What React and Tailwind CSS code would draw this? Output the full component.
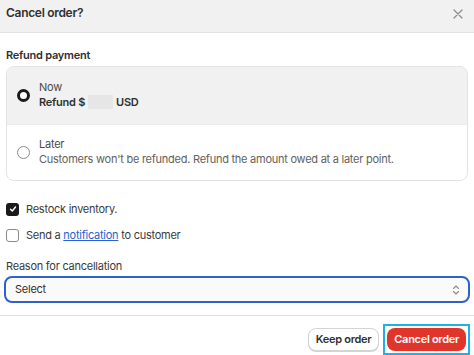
export default function App() {
  return (
    <div className="w-[474px] h-[355px] bg-white overflow-hidden text-[#303030] text-[11px] tracking-[-0.25px]" style={{ fontFamily: "Inter, 'Noto Sans', sans-serif" }}>
      <div className="h-[33px] bg-[#f1f1f1] border-b border-[#e3e3e3] flex items-start justify-between px-[6px] pt-[5px]">
        <h1 className="text-[12px] font-semibold leading-[16px] tracking-[-0.3px]">Cancel order?</h1>
        <svg width="10" height="10" viewBox="0 0 10 10" className="mt-[4px] mr-[5px]" stroke="#8a8a8a" strokeWidth="1.2" strokeLinecap="round">
          <path d="M1 1l8 8M9 1l-8 8" />
        </svg>
      </div>

      <div className="px-[6px]">
        <p className="mt-[14px] font-semibold leading-[16px]">Refund payment</p>

        <div className="mt-[3px] border border-[#e3e3e3] rounded-lg overflow-hidden">
          <div className="h-[57px] bg-[#f1f1f1] flex items-center gap-[9px] pl-[10px]">
            <span className="w-[13px] h-[13px] rounded-full border-[3.5px] border-[#1a1a1a] bg-white" />
            <div className="leading-[15px] -mt-[2px]">
              <div className="text-[#4a4a4a]">Now</div>
              <div className="font-semibold flex items-center">
                Refund $<span className="inline-block w-[25px] h-[14px] bg-[#e6e6e6] mx-[3px]" />USD
              </div>
            </div>
          </div>
          <div className="h-[56px] border-t border-[#ececec] flex items-center gap-[9px] pl-[10px]">
            <span className="w-[13px] h-[13px] rounded-full border border-[#8a8a8a] bg-white" />
            <div className="leading-[15px] -mt-[2px] text-[#616161]">
              <div className="text-[#4a4a4a]">Later</div>
              <div>Customers won't be refunded. Refund the amount owed at a later point.</div>
            </div>
          </div>
        </div>

        <div className="mt-[21px] flex items-center gap-[7px] h-[14px]">
          <span className="w-[13px] h-[13px] rounded-[3px] bg-[#1a1a1a] flex items-center justify-center">
            <svg width="8" height="8" viewBox="0 0 8 8" fill="none" stroke="white" strokeWidth="1.4" strokeLinecap="round" strokeLinejoin="round">
              <path d="M1.5 4.2l1.8 1.8 3.2-4" />
            </svg>
          </span>
          <span className="text-[#3a3a3a]">Restock inventory.</span>
        </div>

        <div className="mt-[12px] flex items-center gap-[7px] h-[14px]">
          <span className="w-[13px] h-[13px] rounded-[3px] border border-[#8a8a8a] bg-white" />
          <span className="text-[#3a3a3a]">
            Send a <a className="text-[#2463d1] underline">notification</a> to customer
          </span>
        </div>

        <p className="mt-[16px] leading-[16px] text-[#3a3a3a]">Reason for cancellation</p>
      </div>

      <div className="px-[4px] mt-[2px]">
        <div className="h-[27px] rounded-lg border-2 border-[#2f62c9] bg-[#fafafa] flex items-center justify-between pl-[9px] pr-[8px]">
          <span className="text-[#303030]">Select</span>
          <svg width="8" height="12" viewBox="0 0 8 12" fill="none" stroke="#8a8a8a" strokeWidth="1.1" strokeLinecap="round" strokeLinejoin="round">
            <path d="M1.5 4.5L4 2l2.5 2.5M1.5 7.5L4 10l2.5-2.5" />
          </svg>
        </div>
      </div>

      <div className="mt-[12px] border-t border-[#e3e3e3] flex justify-end items-center gap-[4px] pt-[8px] pr-[4px]">
        <button className="h-[23px] px-[7px] rounded-lg bg-white border border-[#d4d4d4] shadow-[0_1px_0_#d4d4d4] text-[11px] font-semibold text-[#303030] tracking-[-0.3px]">
          Keep order
        </button>
        <div className="p-[2px] border-2 border-[#1fb0ea]">
          <button className="h-[23px] px-[7px] rounded-lg bg-[#e0352b] text-[11px] font-semibold text-white tracking-[-0.3px]">
            Cancel order
          </button>
        </div>
      </div>
    </div>
  );
}
